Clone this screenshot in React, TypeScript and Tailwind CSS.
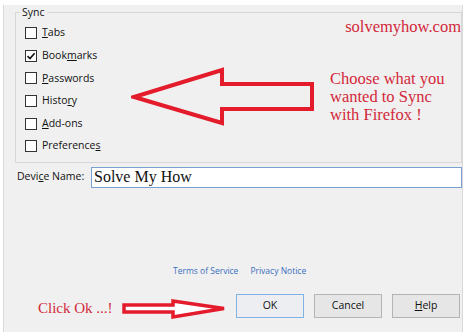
import React from "react";

const items = [
  { pre: "", key: "T", post: "abs", checked: false },
  { pre: "Book", key: "m", post: "arks", checked: true },
  { pre: "", key: "P", post: "asswords", checked: false },
  { pre: "Histo", key: "r", post: "y", checked: false },
  { pre: "", key: "A", post: "dd-ons", checked: false },
  { pre: "Preference", key: "s", post: "", checked: false },
];

const Checkbox = ({ checked }: { checked: boolean }) => (
  <span className="flex h-[12px] w-[12px] items-center justify-center border border-[#333] bg-white">
    {checked && (
      <svg width="10" height="10" viewBox="0 0 10 10">
        <path d="M1.5 5.2 L4 7.6 L8.6 2.2" fill="none" stroke="#111" strokeWidth="1.6" />
      </svg>
    )}
  </span>
);

const App = () => {
  const ui = { fontFamily: '"Open Sans", "Noto Sans", sans-serif' };
  const serif = { fontFamily: '"Liberation Serif", "Times New Roman", serif' };

  return (
    <div className="h-[332px] w-[474px] overflow-hidden bg-white" style={ui}>
      <div className="relative ml-[3px] h-[330px] w-[460px] border-x border-b border-[#d9d9d9] bg-[#f0f0f0] text-[10.5px] text-[#111]">
        <fieldset className="ml-[11px] mt-[5px] w-[447px] border border-[#d7d7d7] pb-[4px]">
          <legend className="ml-[4px] px-[2px] leading-[14px]">Sync</legend>
          <div className="flex flex-col pl-[9px] pt-[3px]">
            {items.map((it, i) => (
              <div key={i} className="flex h-[22.6px] items-center gap-[5px]">
                <Checkbox checked={it.checked} />
                <span>
                  {it.pre}
                  <span className="underline">{it.key}</span>
                  {it.post}
                </span>
              </div>
            ))}
          </div>
        </fieldset>

        <div className="mt-[4px] flex items-center">
          <span className="ml-[13px] w-[74px]">
            Devi<span className="underline">c</span>e Name:
          </span>
          <div
            className="flex h-[21px] w-[371px] items-center border border-[#7a9fd3] bg-white pl-[2px] text-[16px] text-[#111]"
            style={serif}
          >
            Solve My How
          </div>
        </div>

        <div className="ml-[169px] mt-[76px] flex gap-[12px] text-[8.5px] leading-[13px] text-[#3a6fbd]">
          <span>Terms of Service</span>
          <span>Privacy Notice</span>
        </div>

        <div className="mt-[17px] flex justify-end gap-[10px] pr-[2px]">
          <button className="h-[24px] w-[68px] border border-[#7fb3e6] bg-[#eceef1]">OK</button>
          <button className="h-[24px] w-[68px] border border-[#b4b4b4] bg-[#e6e6e6]">Cancel</button>
          <button className="h-[24px] w-[68px] border border-[#b4b4b4] bg-[#e6e6e6]">
            <span className="underline">H</span>elp
          </button>
        </div>

        {/* annotations drawn over the dialog */}
        <div
          className="absolute right-[1px] top-[13px] text-[16.5px] leading-[18px] text-[#d3283a]"
          style={serif}
        >
          solvemyhow.com
        </div>
        <div
          className="absolute left-[326px] top-[65px] text-[16.5px] leading-[18px] text-[#d3283a]"
          style={serif}
        >
          Choose what you
          <br />
          wanted to Sync
          <br />
          with Firefox !
        </div>
        <svg className="absolute left-[127px] top-[62px]" width="186" height="60" viewBox="0 0 186 60">
          <path
            d="M3 30 L91 3 L91 17 L181 17 L181 42 L91 42 L91 56 Z"
            fill="none"
            stroke="#e41b2b"
            strokeWidth="4"
          />
        </svg>
        <div
          className="absolute left-[34px] top-[294px] text-[15px] leading-[18px] text-[#d3283a]"
          style={serif}
        >
          Click Ok ...!
        </div>
        <svg className="absolute left-[117px] top-[293px]" width="108" height="22" viewBox="0 0 108 22">
          <path
            d="M3 7 L52 7 L52 3 L103 10.5 L52 19 L52 14 L3 14 Z"
            fill="#fff"
            stroke="#e41b2b"
            strokeWidth="3.5"
          />
        </svg>
      </div>
    </div>
  );
};

export default App;
